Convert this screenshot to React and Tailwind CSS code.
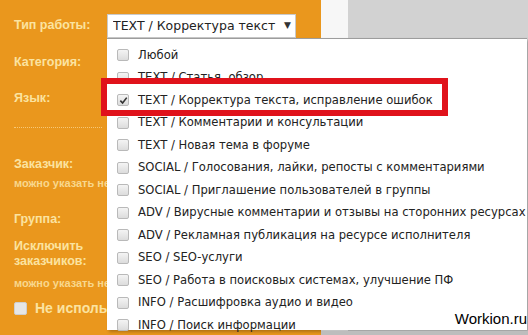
import React from 'react';

const options = [
  { label: 'Любой' },
  { label: 'TEXT / Статья, обзор' },
  { label: 'TEXT / Корректура текста, исправление ошибок', checked: true },
  { label: 'TEXT / Комментарии и консультации' },
  { label: 'TEXT / Новая тема в форуме' },
  { label: 'SOCIAL / Голосования, лайки, репосты с комментариями' },
  { label: 'SOCIAL / Приглашение пользователей в группы' },
  { label: 'ADV / Вирусные комментарии и отзывы на сторонних ресурсах' },
  { label: 'ADV / Рекламная публикация на ресурсе исполнителя' },
  { label: 'SEO / SEO-услуги' },
  { label: 'SEO / Работа в поисковых системах, улучшение ПФ' },
  { label: 'INFO / Расшифровка аудио и видео' },
  { label: 'INFO / Поиск информации' },
];

function Box({ checked }) {
  return (
    <span className="w-[12px] h-[12px] shrink-0 rounded-[2px] border border-[#b9b9b9] bg-gradient-to-b from-[#f4f4f4] to-[#dcdcdc] flex items-center justify-center">
      {checked && (
        <svg width="9" height="9" viewBox="0 0 10 10">
          <path d="M1.5 5.2 L4 7.8 L8.6 1.8" fill="none" stroke="#333" strokeWidth="1.8" />
        </svg>
      )}
    </span>
  );
}

export default function App() {
  const label = 'text-[12.5px] font-bold text-[#fbe3a0] leading-[15px] whitespace-nowrap';
  const hint = 'text-[11px] font-bold text-[#f8d78e] leading-[13px] whitespace-nowrap';

  return (
    <div className="relative w-[528px] h-[335px] overflow-hidden flex" style={{ fontFamily: '"Liberation Sans", Arial, sans-serif' }}>
      {/* orange form panel */}
      <div className="w-[321px] h-full bg-[#ea971d] flex">
        <div className="w-[107px] shrink-0 pl-[14px] pt-[18px] flex flex-col">
          <p className={label}>Тип работы:</p>
          <p className={`${label} mt-[22px]`}>Категория:</p>
          <p className={`${label} mt-[21px]`}>Язык:</p>
          <div className="mt-[21px] w-[88px] border-t border-dotted border-[#f6c877]" />
          <p className={`${label} mt-[29px]`}>Заказчик:</p>
          <p className={`${hint} mt-[5px]`}>можно указать не</p>
          <p className={`${label} mt-[22px]`}>Группа:</p>
          <p className={`${label} mt-[12px] leading-[14px]`}>Исключить<br />заказчиков:</p>
          <p className={`${hint} mt-[8px]`}>можно указать не</p>
          <div className="mt-[8px] flex items-center gap-[8px] whitespace-nowrap">
            <span className="w-[13px] h-[13px] shrink-0 rounded-[2px] bg-[#e6e6e6] border border-[#cfcfcf]" />
            <span className="text-[14px] font-bold text-[#fbe3a0]">Не использовать</span>
          </div>
        </div>
        <div className="pt-[14px]">
          <div className="w-[189px] h-[24px] bg-white border border-[#c9c9c9] flex items-center pl-[5px] pr-[4px] overflow-hidden" style={{ fontFamily: '"DejaVu Sans", Verdana, sans-serif' }}>
            <span className="text-[12.5px] text-[#222] whitespace-nowrap overflow-hidden flex-1">TEXT / Корректура текст</span>
            <span className="text-[9px] text-[#333] ml-[2px]">▼</span>
          </div>
        </div>
      </div>
      <div className="w-[27px] h-full bg-[#f7f7f7]" />
      <div className="flex-1 h-full bg-[#d2d2d2]" />

      {/* opened dropdown list */}
      <div className="absolute left-[107px] top-[38px] w-[420px] h-[292px] bg-white border-t border-[#9d9d9d] shadow-[2px_2px_3px_rgba(0,0,0,0.25)] pt-[5px]" style={{ fontFamily: '"DejaVu Sans", Verdana, sans-serif' }}>
        {options.map((o, i) => (
          <div key={i} className="h-[22.5px] flex items-center pl-[10px] gap-[9px] whitespace-nowrap">
            <Box checked={o.checked} />
            <span className="text-[11.6px] text-[#222]">{o.label}</span>
          </div>
        ))}
      </div>

      {/* red highlight */}
      <div className="absolute left-[101px] top-[78px] w-[347px] h-[38px] border-[6px] border-[#e0121b]" />

      {/* watermark */}
      <span className="absolute right-[1px] top-[311px] text-[15px] text-black leading-none">Workion.ru</span>
      <div className="absolute left-[321px] right-0 bottom-0 h-[4px] bg-[#bdbdbd]" />
    </div>
  );
}
